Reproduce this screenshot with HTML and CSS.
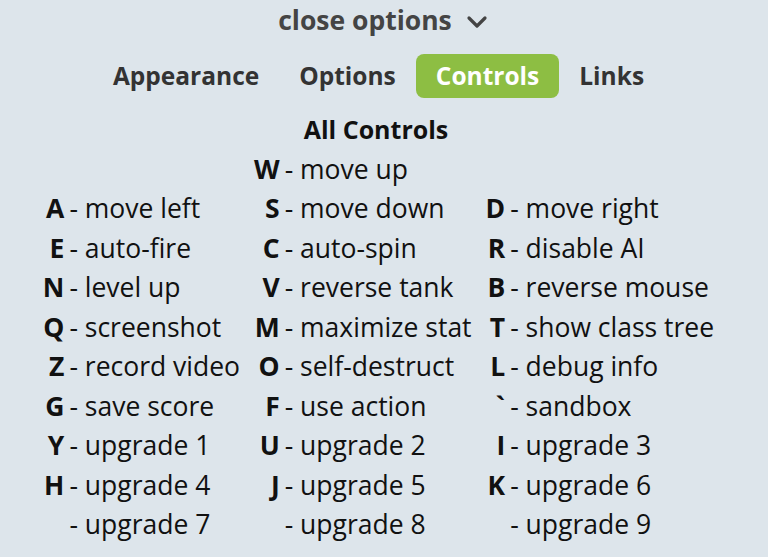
FILE: index.html
```html
<!DOCTYPE html>
<html>
<head>
<meta charset="utf-8">
<link rel="stylesheet" href="styles.css">
</head>
<body>
<div class="page">
  <div class="toggle">
    <span>close options</span>
    <svg class="chev" width="22" height="14" viewBox="0 0 22 14"><path d="M3 3 L11 11 L19 3" fill="none" stroke="#444" stroke-width="3.2" stroke-linecap="round" stroke-linejoin="round"/></svg>
  </div>
  <div class="tabs">
    <div class="tab">Appearance</div>
    <div class="tab">Options</div>
    <div class="tab active">Controls</div>
    <div class="tab">Links</div>
  </div>
  <div class="title">All Controls</div>
  <div class="grid">
    <div class="k"></div><div class="d"></div>
    <div class="k">W</div><div class="d">- move up</div>
    <div class="k"></div><div class="d"></div>

    <div class="k">A</div><div class="d">- move left</div>
    <div class="k">S</div><div class="d">- move down</div>
    <div class="k">D</div><div class="d">- move right</div>

    <div class="k">E</div><div class="d">- auto-fire</div>
    <div class="k">C</div><div class="d">- auto-spin</div>
    <div class="k">R</div><div class="d">- disable AI</div>

    <div class="k">N</div><div class="d">- level up</div>
    <div class="k">V</div><div class="d">- reverse tank</div>
    <div class="k">B</div><div class="d">- reverse mouse</div>

    <div class="k">Q</div><div class="d">- screenshot</div>
    <div class="k">M</div><div class="d">- maximize stat</div>
    <div class="k">T</div><div class="d">- show class tree</div>

    <div class="k">Z</div><div class="d">- record video</div>
    <div class="k">O</div><div class="d">- self-destruct</div>
    <div class="k">L</div><div class="d">- debug info</div>

    <div class="k">G</div><div class="d">- save score</div>
    <div class="k">F</div><div class="d">- use action</div>
    <div class="k">`</div><div class="d">- sandbox</div>

    <div class="k">Y</div><div class="d">- upgrade 1</div>
    <div class="k">U</div><div class="d">- upgrade 2</div>
    <div class="k">I</div><div class="d">- upgrade 3</div>

    <div class="k">H</div><div class="d">- upgrade 4</div>
    <div class="k">J</div><div class="d">- upgrade 5</div>
    <div class="k">K</div><div class="d">- upgrade 6</div>

    <div class="k"></div><div class="d">- upgrade 7</div>
    <div class="k"></div><div class="d">- upgrade 8</div>
    <div class="k"></div><div class="d">- upgrade 9</div>
  </div>
</div>
</body>
</html>
```

FILE: styles.css
```css
html, body {
  margin: 0;
  padding: 0;
  background: #dde5eb;
}
body {
  font-family: "Open Sans", "Noto Sans", sans-serif;
  color: #111;
}
.page {
  width: 768px;
  height: 557px;
  display: flex;
  flex-direction: column;
  align-items: center;
  overflow: hidden;
}
.toggle {
  display: flex;
  align-items: center;
  gap: 14px;
  margin-top: 2px;
  height: 36px;
  font-size: 26.5px;
  font-weight: 700;
  color: #444;
  padding-right: 2px;
}
.chev {
  margin-top: 3px;
}
.tabs {
  display: flex;
  margin-top: 16px;
  padding-right: 11px;
}
.tab {
  font-size: 24.5px;
  font-weight: 700;
  color: #333;
  padding: 0 20px;
  height: 44px;
  line-height: 44px;
  border-radius: 8px;
}
.tab.active {
  background: #8dbe43;
  color: #fff;
}
.title {
  margin-top: 16px;
  font-size: 25px;
  font-weight: 700;
  color: #111;
  line-height: 30px;
  padding-right: 16px;
}
.grid {
  display: grid;
  grid-template-columns: repeat(6, auto);
  grid-auto-rows: 39.5px;
  align-items: center;
  margin-top: 5px;
  padding-right: 11px;
}
.k {
  font-size: 26.5px;
  font-weight: 700;
  text-align: right;
  padding-left: 14px;
}
.k:nth-child(6n+1) {
  padding-left: 0;
}
.d {
  font-size: 26.5px;
  padding-left: 5px;
  white-space: nowrap;
}
```
